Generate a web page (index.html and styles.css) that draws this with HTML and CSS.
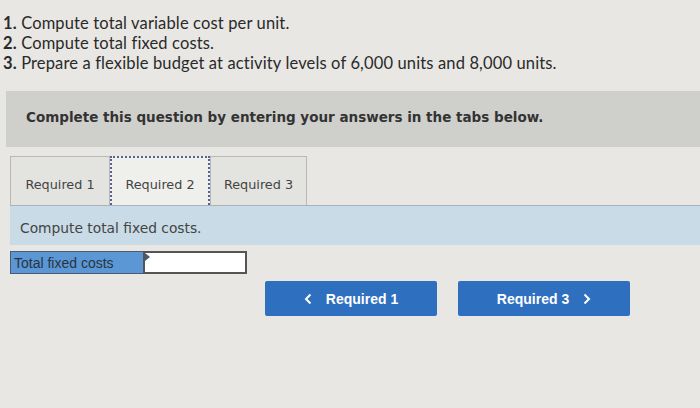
FILE: index.html
```html
<!DOCTYPE html>
<html lang="en">
<head>
    <meta charset="UTF-8">
    <meta name="viewport" content="width=device-width, initial-scale=1.0">
    <title>Flexible Budget</title>
    <link rel="stylesheet" href="styles.css">
</head>
<body>
    <ol class="steps">
        <li><b>1.</b> Compute total variable cost per unit.</li>
        <li><b>2.</b> Compute total fixed costs.</li>
        <li><b>3.</b> Prepare a flexible budget at activity levels of 6,000 units and 8,000 units.</li>
    </ol>

    <div class="banner">Complete this question by entering your answers in the tabs below.</div>

    <div class="tabs">
        <div class="tab">Required 1</div>
        <div class="tab active">Required 2</div>
        <div class="tab">Required 3</div>
    </div>
    <div class="panel">Compute total fixed costs.</div>

    <div class="answer-row">
        <div class="answer-label">Total fixed costs</div>
        <div class="answer-input"><span class="flag"></span></div>
    </div>

    <div class="nav">
        <button class="nav-btn">
            <svg class="chev" width="8" height="12" viewBox="0 0 8 12"><path d="M6.5 1.5 2 6l4.5 4.5" fill="none" stroke="#fff" stroke-width="2"/></svg>
            Required 1
        </button>
        <button class="nav-btn">
            Required 3
            <svg class="chev" width="8" height="12" viewBox="0 0 8 12"><path d="M1.5 1.5 6 6l-4.5 4.5" fill="none" stroke="#fff" stroke-width="2"/></svg>
        </button>
    </div>
</body>
</html>
```

FILE: styles.css
```css
body {
    margin: 0;
    background: #e8e7e3;
    font-family: "Open Sans", sans-serif;
    color: #2a2a2a;
}
.steps {
    list-style: none;
    margin: 0;
    padding: 13px 0 0 3px;
    font-family: Lato, "Open Sans", sans-serif;
    font-size: 16.5px;
    line-height: 20px;
    letter-spacing: 0.14px;
    font-variant-ligatures: none;
}
.steps b {
    font-weight: 700;
}
.banner {
    margin: 18px 0 0 6px;
    height: 56px;
    box-sizing: border-box;
    padding: 18px 0 0 20px;
    background: #cfcfcc;
    font-family: "DejaVu Sans", Verdana, sans-serif;
    font-weight: bold;
    font-size: 13.5px;
    color: #333;
}
.tabs {
    display: flex;
    margin: 9px 0 0 10px;
}
.tab {
    width: 100px;
    height: 49px;
    box-sizing: border-box;
    display: flex;
    align-items: center;
    justify-content: center;
    padding-top: 6px;
    background: #e3e3e0;
    border: 1px solid #b8b8b5;
    border-bottom: none;
    font-family: "DejaVu Sans", Verdana, sans-serif;
    font-size: 12.8px;
    color: #444;
}
.tab:last-child {
    width: 97px;
}
.tab.active {
    background: #efefec;
    border: 2px dotted #5a6090;
    border-bottom: none;
}
.panel {
    margin-left: 10px;
    height: 40px;
    box-sizing: border-box;
    padding: 14px 0 0 10px;
    background: #c8dbe6;
    border-top: 1px solid #a9b4ba;
    font-family: "DejaVu Sans", Verdana, sans-serif;
    font-size: 13.8px;
    color: #444;
}
.answer-row {
    display: flex;
    margin: 6px 0 0 10px;
    height: 23px;
}
.answer-label {
    width: 133px;
    box-sizing: border-box;
    padding: 3px 0 0 3px;
    background: #5b97d5;
    border: 1px solid #4a5a70;
    border-right: none;
    font-family: "Liberation Sans", Arial, sans-serif;
    font-size: 14px;
    color: #28343f;
}
.answer-input {
    position: relative;
    width: 104px;
    background: #fff;
    border: 2px solid #555;
    box-sizing: border-box;
}
.flag {
    position: absolute;
    left: 0;
    top: 0;
    border-top: 4px solid transparent;
    border-bottom: 4px solid transparent;
    border-left: 5px solid #4a5a70;
}
.nav {
    display: flex;
    gap: 21px;
    margin: 7px 0 0 265px;
}
.nav-btn {
    display: flex;
    align-items: center;
    justify-content: center;
    gap: 14px;
    width: 172px;
    height: 35px;
    border: none;
    border-radius: 2px;
    background: #2f6fbf;
    color: #fff;
    font-family: "Liberation Sans", Arial, sans-serif;
    font-weight: bold;
    font-size: 14px;
}
.chev {
    flex: none;
}
```
